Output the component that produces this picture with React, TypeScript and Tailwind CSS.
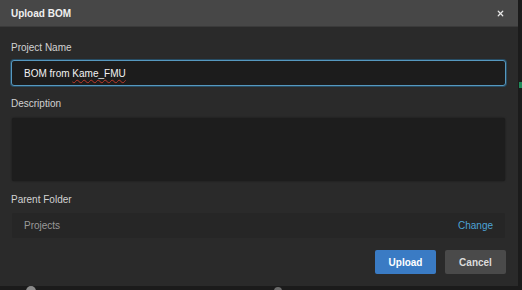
import { X } from 'lucide-react'

const font = { fontFamily: '"Liberation Sans", Arial, sans-serif' }

function Label({ children }: { children: string }) {
  return <div className="h-[14px] leading-[14px] text-[10px] text-[#d2d2d2]">{children}</div>
}

export default function App() {
  return (
    <div className="relative w-[522px] h-[290px] bg-[#1b1b1b] overflow-hidden" style={font}>
      <div className="w-[518px] h-[286px] bg-[#2a2a2a] flex flex-col">
        <div className="h-[27px] shrink-0 bg-[#474747] border-b border-[#3a3a3a] flex items-center justify-between pl-[11px] pr-[13px] pt-[1px]">
          <span className="text-[10px] font-bold text-[#f0f0f0]">Upload BOM</span>
          <X size={9} strokeWidth={3.2} className="text-[#e6e6e6]" />
        </div>

        <div className="flex flex-col pl-[11px] pr-[12px] pt-[14px]">
          <Label>Project Name</Label>
          <div className="mt-[5px] h-[26px] rounded-[3px] border border-[#5698bf] bg-[#1c1c1c] shadow-[0_0_0_1px_#274c63] flex items-center pl-[12px]">
            <span className="text-[10px] text-[#f2f2f2]">
              BOM from{' '}
              <span className="underline decoration-wavy decoration-[#c0392b] underline-offset-2">Kame_FMU</span>
            </span>
          </div>

          <div className="mt-[11px]">
            <Label>Description</Label>
          </div>
          <div className="mt-[7px] mx-[1px] h-[63px] rounded-[2px] bg-[#1d1d1d] shadow-[0_0_2px_rgba(0,0,0,0.5)]" />

          <div className="mt-[12px]">
            <Label>Parent Folder</Label>
          </div>
          <div className="mt-[6px] mx-[1px] h-[25px] rounded-[2px] bg-[#262626] flex items-center justify-between pl-[12px] pr-[12px]">
            <span className="text-[10px] text-[#9a9a9a]">Projects</span>
            <span className="text-[10px] text-[#4da3d6]">Change</span>
          </div>

          <div className="mt-[12px] flex justify-end gap-[9px]">
            <button className="w-[61px] h-[24px] rounded-[2px] bg-[#3a7bc4] text-[10px] font-bold text-white">Upload</button>
            <button className="w-[61px] h-[24px] rounded-[2px] bg-[#4a4a4a] text-[10px] font-bold text-[#dcdcdc]">Cancel</button>
          </div>
        </div>
      </div>
      <div className="absolute left-[26px] top-[286px] w-[10px] h-[10px] rounded-full bg-[#8a8a8a]" />
      <div className="absolute left-[274px] top-[287px] w-[8px] h-[8px] rounded-full bg-[#6a6a6a]" />
      <div className="absolute left-[519px] top-[82px] w-[3px] h-[6px] bg-[#1f8a5a]" />
    </div>
  )
}
